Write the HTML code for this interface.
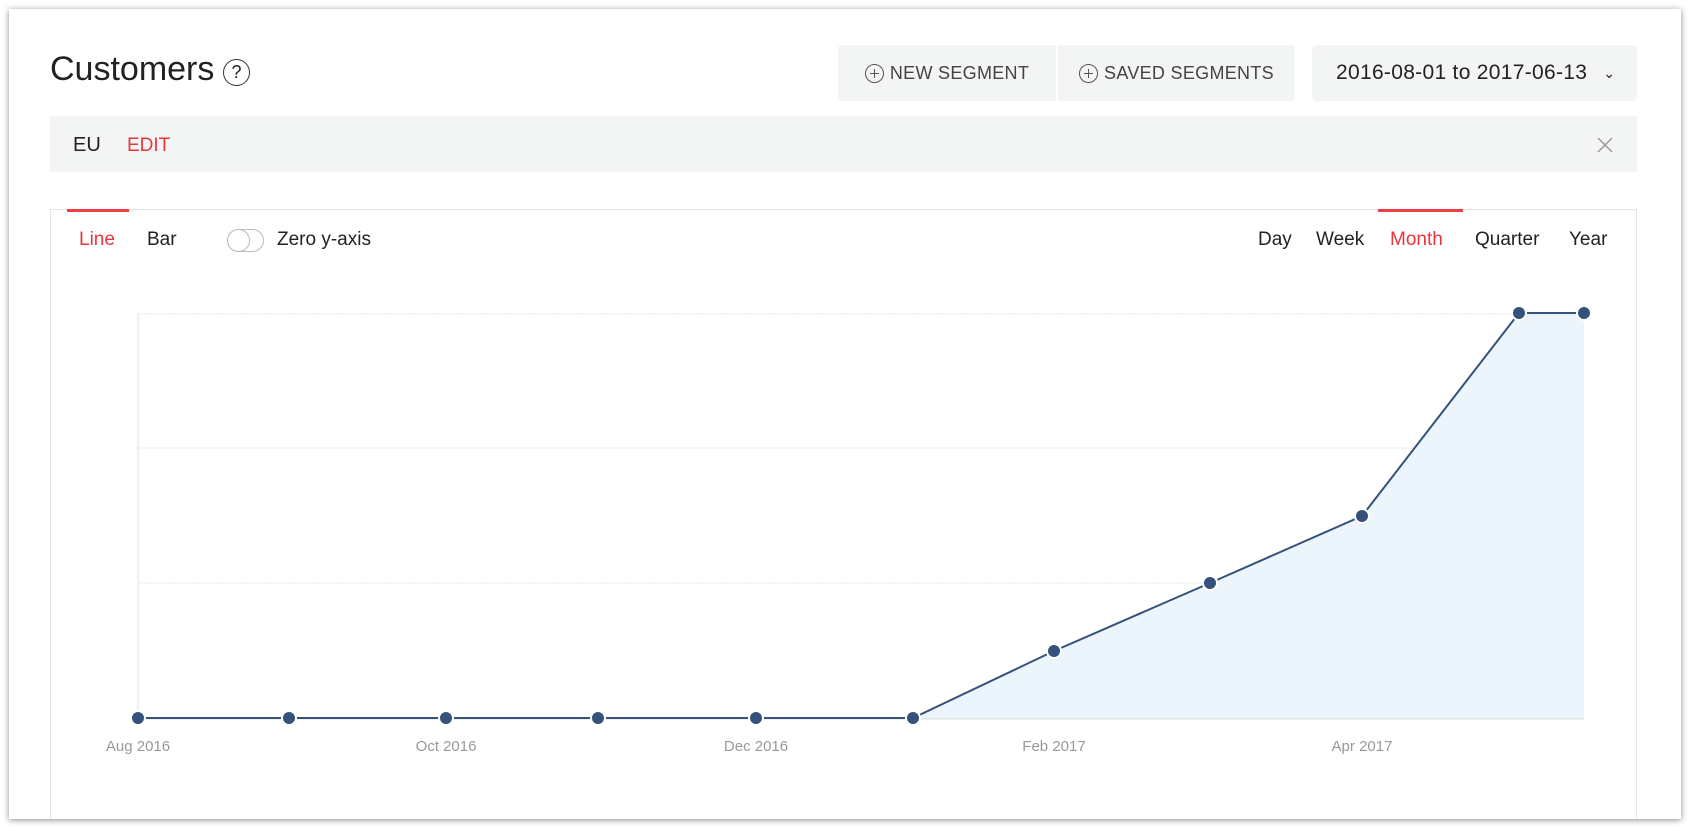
<!DOCTYPE html>
<html><head><meta charset="utf-8"><style>
*{box-sizing:border-box;margin:0;padding:0}
body{width:1690px;height:831px;background:#fff;font-family:"Liberation Sans",sans-serif;position:relative;overflow:hidden;color:#222}
.card{position:absolute;left:9px;top:9px;width:1672px;height:810px;background:#fff;box-shadow:0 1px 6px rgba(0,0,0,.45)}
.a{position:absolute}
.btn{position:absolute;background:#f3f4f4;border-radius:4px;font-size:18px;color:#444;display:flex;align-items:center;justify-content:center;letter-spacing:.3px}
.plus{display:inline-block;width:19px;height:19px;border:1.3px solid #555;border-radius:50%;position:relative;margin-right:6px}
.plus:before{content:"";position:absolute;left:4px;top:8px;width:9px;height:1.3px;background:#555}
.plus:after{content:"";position:absolute;left:8px;top:4px;width:1.3px;height:9px;background:#555}
.t{position:absolute;font-size:19px;top:229px}
.lbl{position:absolute;font-size:15px;color:#999;top:738px;transform:translateX(-50%)}
</style></head><body>
<div class="card"></div>
<div class="a" style="left:50px;top:50px;font-size:34px;color:#222">Customers</div>
<div class="a" style="left:223px;top:59px;width:27px;height:27px;border:1.5px solid #333;border-radius:50%;font-size:18px;text-align:center;line-height:24px">?</div>
<div class="btn" style="left:838px;top:45px;width:218px;height:56px;border-radius:4px 0 0 4px"><span class="plus"></span>NEW SEGMENT</div>
<div class="btn" style="left:1058px;top:45px;width:237px;height:56px;border-radius:0 4px 4px 0"><span class="plus"></span>SAVED SEGMENTS</div>
<div class="btn" style="left:1312px;top:45px;width:325px;height:56px;font-size:21px;color:#222;justify-content:flex-start;padding-left:24px">2016-08-01 to 2017-06-13<span style="font-size:14px;margin-left:16px">&#8964;</span></div>
<div class="a" style="left:50px;top:116px;width:1587px;height:56px;background:#f3f4f4"></div>
<div class="a" style="left:73px;top:134px;font-size:20px">EU</div>
<div class="a" style="left:127px;top:135px;font-size:19px;color:#e8363e">EDIT</div>
<svg class="a" style="left:1597px;top:137px" width="16" height="16"><path d="M1 1L15 15M15 1L1 15" stroke="#999" stroke-width="1.5"/></svg>
<div class="a" style="left:50px;top:209px;width:1587px;height:610px;border:1.5px solid #e2e5e6;border-bottom:none"></div>
<div class="a" style="left:67px;top:209px;width:62px;height:3px;background:#ee4044"></div>
<div class="a" style="left:1378px;top:209px;width:85px;height:3px;background:#ee4044"></div>
<div class="t" style="left:79px;color:#e8363e">Line</div>
<div class="t" style="left:147px">Bar</div>
<div class="a" style="left:227px;top:229px;width:37px;height:23px;border:1.5px solid #bbb;border-radius:12px"></div>
<div class="a" style="left:227px;top:229px;width:23px;height:23px;border:1.5px solid #bbb;border-radius:50%;background:#fff"></div>
<div class="t" style="left:277px">Zero y-axis</div>
<div class="t" style="left:1258px">Day</div>
<div class="t" style="left:1316px">Week</div>
<div class="t" style="left:1390px;color:#e8363e">Month</div>
<div class="t" style="left:1475px">Quarter</div>
<div class="t" style="left:1569px">Year</div>
<svg class="a" style="left:0;top:0" width="1690" height="831">
<g stroke="#e3e3e3" stroke-width="1" stroke-dasharray="2,1">
<line x1="138" y1="314" x2="1584" y2="314"/><line x1="138" y1="448" x2="1584" y2="448"/><line x1="138" y1="583" x2="1584" y2="583"/>
</g>
<line x1="138" y1="314" x2="138" y2="718" stroke="#e3e3e3"/>
<line x1="138" y1="718.5" x2="1584" y2="718.5" stroke="#dde2e4" stroke-width="2"/>
<path d="M913 718L1054 651L1210 583L1362 516L1519 313L1584 313L1584 718Z" fill="#edf5fc"/>
<polyline points="138,718 289,718 446,718 598,718 756,718 913,718 1054,651 1210,583 1362,516 1519,313 1584,313" fill="none" stroke="#34527a" stroke-width="2"/>
<g fill="#34527a" stroke="#fff" stroke-width="2">
<circle cx="138" cy="718" r="7"/><circle cx="289" cy="718" r="7"/><circle cx="446" cy="718" r="7"/><circle cx="598" cy="718" r="7"/><circle cx="756" cy="718" r="7"/><circle cx="913" cy="718" r="7"/><circle cx="1054" cy="651" r="7"/><circle cx="1210" cy="583" r="7"/><circle cx="1362" cy="516" r="7"/><circle cx="1519" cy="313" r="7"/><circle cx="1584" cy="313" r="7"/>
</g>
</svg>
<div class="lbl" style="left:138px">Aug 2016</div>
<div class="lbl" style="left:446px">Oct 2016</div>
<div class="lbl" style="left:756px">Dec 2016</div>
<div class="lbl" style="left:1054px">Feb 2017</div>
<div class="lbl" style="left:1362px">Apr 2017</div>
</body></html>
